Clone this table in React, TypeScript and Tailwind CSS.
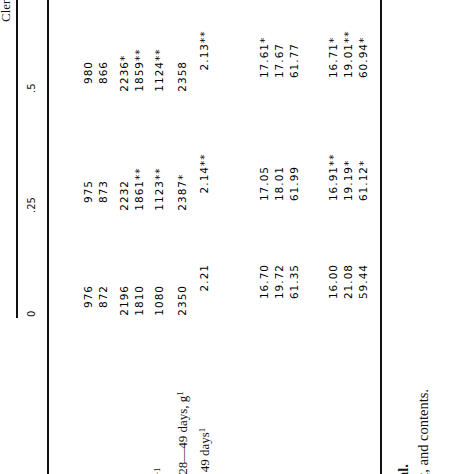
import type { ReactNode } from 'react'

type Cell = { v: string; s?: string }
type Row = { label: ReactNode; gap: string; dec?: boolean; cells: Cell[] }

// right padding inside each treatment column, integers vs decimals
const INT_PAD = ['pr-[72px]', 'pr-[87px]', 'pr-[61px]']
const DEC_PAD = ['pr-[51px]', 'pr-[73px]', 'pr-[43px]']

const Sup = ({ children }: { children: ReactNode }) => (
  <span className="relative -top-[4px] text-[9px]">{children}</span>
)

const rows: Row[] = [
  { label: 'Males', gap: 'mt-[32px]', cells: [{ v: '976' }, { v: '975' }, { v: '980' }] },
  { label: 'Females', gap: 'mt-0', cells: [{ v: '872' }, { v: '873' }, { v: '866' }] },
  { label: 'Males', gap: 'mt-[6px]', cells: [{ v: '2196' }, { v: '2232' }, { v: '2236', s: '*' }] },
  { label: 'Females', gap: 'mt-0', cells: [{ v: '1810' }, { v: '1861', s: '**' }, { v: '1859', s: '**' }] },
  {
    label: (
      <>
        Weight gain, g bird<Sup>−1</Sup>
      </>
    ),
    gap: 'mt-[5px]',
    cells: [{ v: '1080' }, { v: '1123', s: '**' }, { v: '1124', s: '**' }],
  },
  {
    label: (
      <>
        Feed consumption, 28—49 days, g<Sup>1</Sup>
      </>
    ),
    gap: 'mt-[8px]',
    cells: [{ v: '2350' }, { v: '2387', s: '*' }, { v: '2358' }],
  },
  {
    label: (
      <>
        Feed:gain ratio 0 to 49 days<Sup>1</Sup>
      </>
    ),
    gap: 'mt-[7px]',
    dec: true,
    cells: [{ v: '2.21' }, { v: '2.14', s: '**' }, { v: '2.13', s: '**' }],
  },
  { label: 'Protein, %', gap: 'mt-[45px]', dec: true, cells: [{ v: '16.70' }, { v: '17.05' }, { v: '17.61', s: '*' }] },
  { label: 'Fat, %', gap: 'mt-0', dec: true, cells: [{ v: '19.72' }, { v: '18.01' }, { v: '17.67' }] },
  { label: 'Moisture, %', gap: 'mt-0', dec: true, cells: [{ v: '61.35' }, { v: '61.99' }, { v: '61.77' }] },
  { label: 'Protein, %', gap: 'mt-[24px]', dec: true, cells: [{ v: '16.00' }, { v: '16.91', s: '**' }, { v: '16.71', s: '*' }] },
  { label: 'Fat, %', gap: 'mt-0', dec: true, cells: [{ v: '21.08' }, { v: '19.19', s: '*' }, { v: '19.01', s: '**' }] },
  { label: 'Moisture, %', gap: 'mt-0', dec: true, cells: [{ v: '59.44' }, { v: '61.12', s: '*' }, { v: '60.94', s: '*' }] },
]

const GRID = 'grid grid-cols-[157px_104px_120px_93px]'

function TableBody() {
  return (
    <div>
      {rows.map((row, i) => (
        <div key={i} className={`${GRID} ${row.gap} h-[15px] leading-[15px]`}>
          <div className="-ml-[103px] whitespace-nowrap font-['Liberation_Serif',serif] text-[13px]">
            {row.label}
          </div>
          {row.cells.map((c, j) => (
            <div
              key={j}
              className={`whitespace-nowrap text-right font-['DejaVu_Sans',sans-serif] text-[10.5px] tracking-[1px] text-black ${
                row.dec ? DEC_PAD[j] : INT_PAD[j]
              }`}
            >
              {c.v}
              <span className="inline-block w-0 text-left">{c.s ?? ''}</span>
            </div>
          ))}
        </div>
      ))}
    </div>
  )
}

export default function App() {
  return (
    <div className="relative h-[474px] w-[474px] overflow-hidden bg-white text-[#111]">
      {/* the page was scanned sideways, so the whole table is turned */}
      <div className="h-[474px] w-[474px] -rotate-90">
        <div className="h-[16px] whitespace-nowrap pl-[452px] font-['Liberation_Serif',serif] text-[13px] leading-[12px]">
          Clenbuterol, ppm
        </div>
        <div className="ml-[156px] h-[2px] bg-[#111]" />

        <div className={`${GRID} h-[29px] pt-[8px] font-['DejaVu_Sans',sans-serif] text-[10px] leading-[12px]`}>
          <div />
          <div>0</div>
          <div>.25</div>
          <div>.5</div>
        </div>
        <div className="h-[2px] bg-[#111]" />

        <TableBody />

        <div className="mt-[9px] h-[2px] bg-[#111]" />

        <div className="mt-[11px] font-['Liberation_Serif',serif] text-[14.5px] leading-[20px]">
          <p className="-ml-[400px] w-[410px] whitespace-nowrap text-right font-bold">
            Data are means of four replicate pens in each trial.
          </p>
          <p className="-ml-[400px] w-[485px] whitespace-nowrap text-right">
            <Sup>2</Sup>Carcass without feathers, head, feet, gastrointestinal tract, and contents.
          </p>
        </div>
      </div>
    </div>
  )
}
